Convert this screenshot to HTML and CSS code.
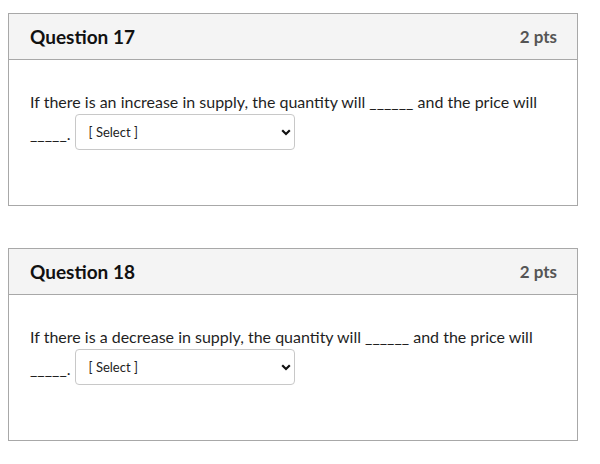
FILE: index.html
```html
<!DOCTYPE html>
<html>
<head>
<meta charset="utf-8">
<link rel="stylesheet" href="styles.css">
</head>
<body>
<div class="quiz">
  <div class="question">
    <div class="q-header">
      <span class="q-title">Question 17</span>
      <span class="q-pts">2 pts</span>
    </div>
    <div class="q-body">
      <p class="q-text">If there is an increase in supply, the quantity will ______ and the price will _____. <span class="select-wrap"><select class="q-select"><option>[ Select ]</option></select><svg class="chev" width="10" height="7" viewBox="0 0 10 7"><path d="M1.2 1.3 L5 5 L8.8 1.3" fill="none" stroke="#111" stroke-width="2.2"/></svg></span></p>
    </div>
  </div>
  <div class="question">
    <div class="q-header">
      <span class="q-title">Question 18</span>
      <span class="q-pts">2 pts</span>
    </div>
    <div class="q-body">
      <p class="q-text">If there is a decrease in supply, the quantity will ______ and the price will _____. <span class="select-wrap"><select class="q-select"><option>[ Select ]</option></select><svg class="chev" width="10" height="7" viewBox="0 0 10 7"><path d="M1.2 1.3 L5 5 L8.8 1.3" fill="none" stroke="#111" stroke-width="2.2"/></svg></span></p>
    </div>
  </div>
</div>
</body>
</html>
```
FILE: styles.css
```css
html, body {
  margin: 0;
  padding: 0;
  background: #fff;
}
body {
  font-family: Lato, "Liberation Sans", sans-serif;
  color: #2d3b45;
}
.quiz {
  padding: 13px 22px 0 8px;
  display: flex;
  flex-direction: column;
  gap: 42px;
}
.question {
  border: 1px solid #a8a8a8;
  height: 191px;
  display: flex;
  flex-direction: column;
}
.q-header {
  height: 45px;
  background: #f4f4f4;
  border-bottom: 1px solid #a8a8a8;
  display: flex;
  align-items: center;
  justify-content: space-between;
  padding: 0 20px 0 21px;
}
.q-title {
  font-weight: 700;
  font-size: 19px;
  color: #111;
}
.q-pts {
  font-weight: 700;
  font-size: 17px;
  color: #555;
}
.q-body {
  padding: 31px 20px 0 21px;
}
.q-text {
  margin: 0;
  font-size: 16px;
  line-height: 22px;
  color: #1f1f1f;
}
.select-wrap {
  position: relative;
  display: inline-block;
  vertical-align: middle;
  margin: 1px 0 8px 0;
}
.q-select {
  appearance: none;
  -webkit-appearance: none;
  width: 220px;
  height: 36px;
  border: 1px solid #c8c8c8;
  border-radius: 4px;
  background: #fff;
  font-family: Lato, "Liberation Sans", sans-serif;
  font-size: 13px;
  color: #222;
  padding: 0 0 0 13px;
  display: block;
}
.chev {
  position: absolute;
  right: 4px;
  top: 15px;
}
```
